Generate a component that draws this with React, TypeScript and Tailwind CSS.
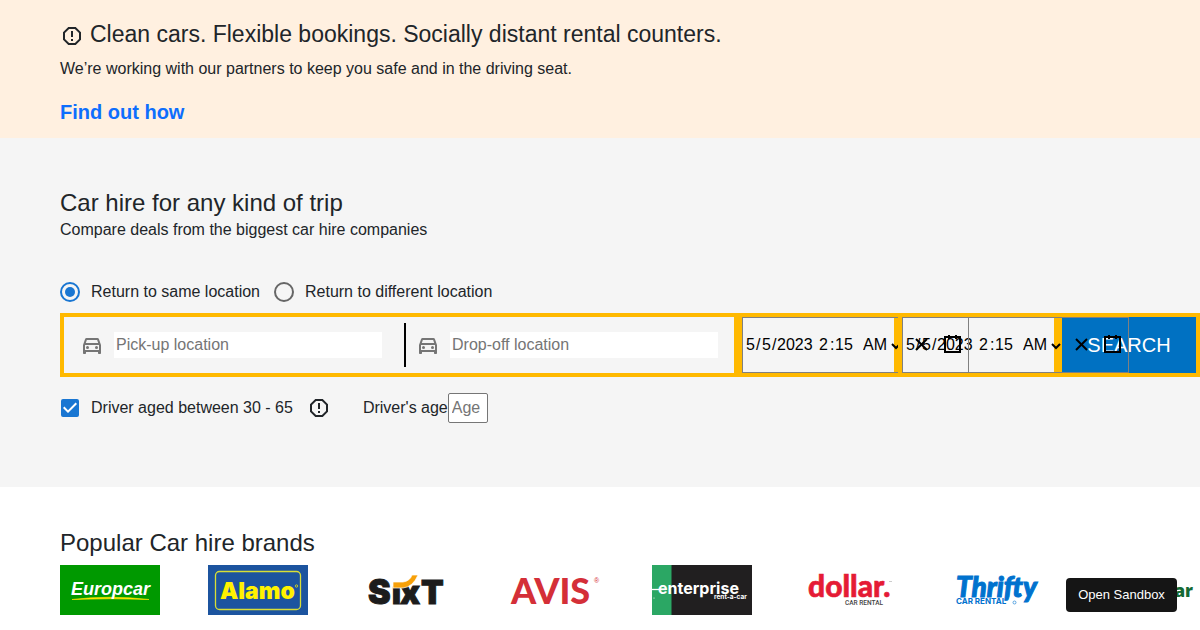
import React from "react";
import { MdOutlineDirectionsCarFilled, MdReportGmailerrorred } from "react-icons/md";

function LocationField({ label }: { label: string }) {
  return (
    <label className="flex min-w-0 flex-1 items-center gap-2.5">
      <MdOutlineDirectionsCarFilled aria-hidden="true" className="size-6 shrink-0 text-[#757575]" />
      <input
        aria-label={label}
        placeholder={label}
        className="h-[26px] min-w-0 flex-1 bg-white px-0.5 text-black outline-none placeholder:text-[#757575]"
      />
    </label>
  );
}

function DateTimeField({ name }: { name: string }) {
  return (
    <div className="relative -ml-1 w-[156px] shrink-0 border-l-4 border-[#ffb900] bg-[#f5f5f5]">
      <div className="flex h-full w-[227px] border border-r-0 border-[#808080] text-black">
        <div className="flex items-center pl-[3px]">
          <input aria-label={`${name} month`} defaultValue="5" className="w-2.5 bg-transparent outline-none" />
          <span className="w-1.5">/</span>
          <input aria-label={`${name} day`} defaultValue="5" className="w-2.5 bg-transparent outline-none" />
          <span className="w-[5px]">/</span>
          <input aria-label={`${name} year`} defaultValue="2023" className="w-[42px] bg-transparent outline-none" />
          <input aria-label={`${name} hour`} defaultValue="2" className="w-[11px] bg-transparent outline-none" />
          <span className="w-[5px]">:</span>
          <input aria-label={`${name} minute`} defaultValue="15" className="w-[28px] bg-transparent outline-none" />
          <span className="flex items-center">
            <select aria-label={`${name} AM or PM`} className="w-[27px] appearance-none bg-transparent outline-none">
              <option>AM</option>
              <option>PM</option>
            </select>
            <svg className="mt-0.5 h-2 w-3" viewBox="0 0 12 8" fill="none" stroke="black" strokeWidth="2">
              <path d="M2 2l4 4 4-4" />
            </svg>
          </span>
        </div>
        <div className="relative z-20 ml-auto flex shrink-0 border-r border-[#808080] pb-0.5">
          <button type="button" aria-label={`Clear ${name}`} className="px-1.5">
            <svg width="19" height="19" viewBox="0 0 19 19" stroke="black" strokeWidth="2">
              <line x1="4" x2="15" y1="4" y2="15" />
              <line x1="15" x2="4" y1="4" y2="15" />
            </svg>
          </button>
          <button type="button" aria-label={`Open ${name} calendar`} className="px-1.5">
            <svg width="19" height="19" viewBox="0 0 19 19" stroke="black" strokeWidth="2">
              <rect fill="none" height="15" width="15" x="2" y="2" />
              <line x1="6" x2="6" y1="0" y2="4" />
              <line x1="13" x2="13" y1="0" y2="4" />
            </svg>
          </button>
        </div>
      </div>
    </div>
  );
}

function ReturnOption({ label, checked }: { label: string; checked?: boolean }) {
  return (
    <label className="flex items-center gap-[11px]">
      <input
        type="radio"
        name="return"
        defaultChecked={checked}
        className="size-5 appearance-none rounded-full border-2 border-[#666666] bg-clip-content p-[3px] checked:border-[#1976d2] checked:bg-[#1976d2]"
      />
      {label}
    </label>
  );
}

function Logo({ name, children }: { name: string; children: React.ReactNode }) {
  return (
    <svg role="img" aria-label={name} width="100" height="50" viewBox="0 0 100 50" className="shrink-0">
      {children}
    </svg>
  );
}

function Brands() {
  return (
    <div className="mt-2 flex gap-12 overflow-hidden">
      <Logo name="Europcar">
        <rect width="100" height="50" fill="#009900" />
        <path d="M12 34.5Q50 30 89 34.5Q50 33 12 34.5Z" fill="#ffe600" stroke="#ffe600" strokeWidth="0.6" />
        <text x="11" y="30" fontSize="18" fontWeight="700" fontStyle="italic" fill="white" className="font-['Liberation_Sans',sans-serif]">Europcar</text>
      </Logo>
      <Logo name="Alamo">
        <rect width="100" height="50" fill="#1c549f" />
        <rect x="7.5" y="6.5" width="85" height="38" rx="4" fill="none" stroke="#d9df35" strokeWidth="1.3" />
        <text x="12" y="34" fontSize="23" fontWeight="900" fill="#fff200" className="font-[Inter,sans-serif]">Alamo</text>
        <circle cx="88.5" cy="21" r="1.2" fill="none" stroke="#fff200" strokeWidth="0.7" />
      </Logo>
      <Logo name="Sixt">
        <text y="39" fontWeight="900" fill="#1c1c1c" stroke="#1c1c1c" strokeWidth="1" className="font-[Inter,sans-serif]">
          <tspan x="12" fontSize="34">S</tspan>
          <tspan x="36" fontSize="30">ı</tspan>
          <tspan x="44" fontSize="33">x</tspan>
          <tspan x="65" fontSize="33">T</tspan>
        </text>
        <path d="M37 17H47Q54 16 56 10H62Q57 22 47 23H37Z" fill="#f7a008" stroke="white" strokeWidth="0.7" />
      </Logo>
      <Logo name="Avis">
        <text x="7" y="39" fontSize="36" fontWeight="900" fill="#d42f38" className="font-[Lato,sans-serif]">AVIS</text>
        <text x="90" y="18" fontSize="7" fill="#d42f38" className="font-['Liberation_Sans',sans-serif]">®</text>
      </Logo>
      <Logo name="Enterprise rent-a-car">
        <rect width="100" height="50" fill="#211f20" />
        <rect width="19.5" height="50" fill="#2ba764" />
        <path d="M0 24.5H14" stroke="white" strokeWidth="1.3" />
        <text x="6" y="29" fontSize="16" fontWeight="700" fill="white" className="font-[Inter,sans-serif]">enterprise</text>
        <text x="62" y="33.5" fontSize="6.5" fontWeight="700" fill="white" className="font-[Inter,sans-serif]">rent-a-car</text>
        <circle cx="2" cy="33" r="0.6" fill="white" />
      </Logo>
      <Logo name="Dollar car rental">
        <text x="8" y="32" fontSize="30" fontWeight="900" fill="#e51b35" stroke="#e51b35" strokeWidth="0.6" className="font-[Lato,sans-serif]">dollar.</text>
        <text x="45" y="40" fontSize="6.5" fontWeight="500" fill="#444444" className="font-[Roboto,sans-serif]">CAR RENTAL</text>
        <path d="M89 16.5H92" stroke="#aaaaaa" strokeWidth="0.6" />
      </Logo>
      <Logo name="Thrifty car rental">
        <text x="8" y="32" fontSize="28" fontWeight="900" fontStyle="italic" fill="#0072ce" stroke="#0072ce" strokeWidth="1" className="font-[Lato,sans-serif]">Thrifty</text>
        <text x="8" y="39" fontSize="8" fontWeight="700" fill="#0072ce" className="font-[Inter,sans-serif]">CAR RENTAL</text>
        <circle cx="66.5" cy="37.5" r="1.5" fill="none" stroke="#0072ce" strokeWidth="0.6" />
      </Logo>
      <Logo name="Car rental">
        <text x="97" y="32" textAnchor="end" fontSize="17" fontWeight="900" fill="#156a35" className="font-['Open_Sans',sans-serif]">Car</text>
      </Logo>
    </div>
  );
}

export default function App() {
  return (
    <div className="min-h-screen overflow-x-hidden bg-white font-['Liberation_Sans',sans-serif] text-base leading-6 text-[#212529]">
      <section className="bg-[#fff0e0] pt-5 pb-3 pl-[60px]">
        <h2 className="flex items-center gap-1.5 text-[23px] leading-7">
          <MdReportGmailerrorred aria-hidden="true" className="mt-1 size-6" />
          Clean cars. Flexible bookings. Socially distant rental counters.
        </h2>
        <p className="mt-[9px]">We’re working with our partners to keep you safe and in the driving seat.</p>
        <a href="#safety" className="mt-[19px] inline-block text-xl leading-6 font-bold text-[#0d6efd]">
          Find out how
        </a>
      </section>

      <form className="bg-[#f5f5f5] pt-[51px] pb-16 pl-[60px]" onSubmit={(event) => event.preventDefault()}>
        <h1 className="text-2xl leading-7">Car hire for any kind of trip</h1>
        <p className="mt-px">Compare deals from the biggest car hire companies</p>

        <div className="mt-[38px] flex gap-3.5">
          <ReturnOption label="Return to same location" checked />
          <ReturnOption label="Return to different location" />
        </div>

        <div className="mt-[9px] flex h-16 gap-2 bg-[#ffb900] p-1">
          <div className="flex min-w-0 flex-1 items-center bg-[#f5f5f5] px-4">
            <LocationField label="Pick-up location" />
            <div className="mr-2.5 ml-[22px] h-11 w-0.5 bg-black" />
            <LocationField label="Drop-off location" />
          </div>
          <DateTimeField name="Pick-up" />
          <DateTimeField name="Drop-off" />
          <button type="submit" className="w-[134px] shrink-0 bg-[#0071c2] text-xl text-white">
            SEARCH
          </button>
        </div>

        <div className="mt-4 flex items-center">
          <label className="flex items-center gap-3 pl-px">
            <span className="relative size-[18px]">
              <input
                type="checkbox"
                defaultChecked
                className="peer block size-[18px] appearance-none rounded-xs border-2 border-[#666666] checked:border-[#1976d2] checked:bg-[#1976d2]"
              />
              <svg
                className="pointer-events-none absolute inset-0 hidden peer-checked:block"
                viewBox="3 3 18 18"
                fill="white"
              >
                <path d="M10 17l-5-5 1.41-1.41L10 14.17l7.59-7.59L19 8l-9 9z" />
              </svg>
            </span>
            Driver aged between 30 - 65
          </label>
          <MdReportGmailerrorred aria-hidden="true" className="ml-3.5 size-6" />
          <label className="ml-8 flex items-center">
            Driver's age
            <input
              placeholder="Age"
              className="h-[30px] w-10 rounded-xs border border-[#767676] bg-white px-[3px] text-black outline-none placeholder:text-[#757575]"
            />
          </label>
        </div>
      </form>

      <section className="pt-[42px] pl-[60px]">
        <h2 className="text-2xl leading-7">Popular Car hire brands</h2>
        <Brands />
      </section>

      <button
        type="button"
        className="fixed right-[23px] bottom-[18px] z-30 h-[34px] w-[111px] rounded bg-[#151515] text-[13px] text-white"
      >
        Open Sandbox
      </button>
    </div>
  );
}
